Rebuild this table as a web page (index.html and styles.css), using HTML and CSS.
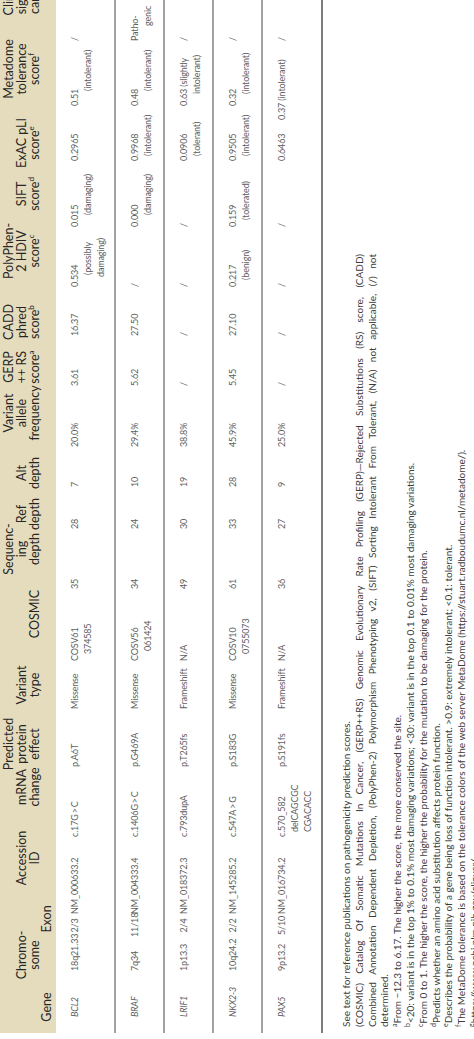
FILE: index.html
```html
<!DOCTYPE html>
<html lang="en">
<head>
<meta charset="utf-8">
<title>Variant table</title>
<link rel="stylesheet" href="styles.css">
</head>
<body>
<div class="page">
  <div class="sheet">
    <div class="table">
      <div class="head">
        <div class="h low"><span>Gene</span></div>
        <div class="h"><span>Chromo-</span><span>some</span></div>
        <div class="h low"><span>Exon</span></div>
        <div class="h"><span>Accession</span><span>ID</span></div>
        <div class="h"><span>mRNA</span><span>change</span></div>
        <div class="h"><span>Predicted</span><span>protein</span><span>effect</span></div>
        <div class="h"><span>Variant</span><span>type</span></div>
        <div class="h"><span>COSMIC</span></div>
        <div class="h"><span>Sequenc-</span><span>ing</span><span>depth</span></div>
        <div class="h"><span>Ref</span><span>depth</span></div>
        <div class="h"><span>Alt</span><span>depth</span></div>
        <div class="h"><span>Variant</span><span>allele</span><span>frequency</span></div>
        <div class="h"><span>GERP</span><span>++ RS</span><span>score<sup>a</sup></span></div>
        <div class="h"><span>CADD</span><span>phred</span><span>score<sup>b</sup></span></div>
        <div class="h"><span>PolyPhen-</span><span>2 HDIV</span><span>score<sup>c</sup></span></div>
        <div class="h"><span>SIFT</span><span>score<sup>d</sup></span></div>
        <div class="h"><span>ExAC pLI</span><span>score<sup>e</sup></span></div>
        <div class="h"><span>Metadome</span><span>tolerance</span><span>score<sup>f</sup></span></div>
        <div class="h"><span>ClinVar</span><span>signifi-</span><span>cance<sup>g</sup></span></div>
      </div>

      <div class="row">
        <div class="c g"><span>BCL2</span></div>
        <div class="c"><span>18q21.33</span></div>
        <div class="c ctr"><span>2/3</span></div>
        <div class="c"><span>NM_000633.2</span></div>
        <div class="c"><span>c.17G&#8201;&gt;&#8201;C</span></div>
        <div class="c"><span>p.A6T</span></div>
        <div class="c"><span>Missense</span></div>
        <div class="c"><span>COSV61</span><span class="i7">374585</span></div>
        <div class="c"><span>35</span></div>
        <div class="c"><span>28</span></div>
        <div class="c"><span>7</span></div>
        <div class="c"><span>20.0%</span></div>
        <div class="c"><span>3.61</span></div>
        <div class="c"><span>16.37</span></div>
        <div class="c"><span>0.534</span><span class="i12">(possibly</span><span class="i10">damaging)</span></div>
        <div class="c"><span>0.015</span><span class="i12">(damaging)</span></div>
        <div class="c"><span>0.2965</span></div>
        <div class="c"><span>0.51</span><span class="i15">(intolerant)</span></div>
        <div class="c"><span>/</span></div>
      </div>

      <div class="row">
        <div class="c g"><span>BRAF</span></div>
        <div class="c"><span>7q34</span></div>
        <div class="c ctr"><span>11/18</span></div>
        <div class="c"><span>NM_004333.4</span></div>
        <div class="c"><span>c.1406G&#8201;&gt;&#8201;C</span></div>
        <div class="c"><span>p.G469A</span></div>
        <div class="c"><span>Missense</span></div>
        <div class="c"><span>COSV56</span><span class="i10">061424</span></div>
        <div class="c"><span>34</span></div>
        <div class="c"><span>24</span></div>
        <div class="c"><span>10</span></div>
        <div class="c"><span>29.4%</span></div>
        <div class="c"><span>5.62</span></div>
        <div class="c"><span>27.50</span></div>
        <div class="c"><span>/</span></div>
        <div class="c"><span>0.000</span><span class="i12">(damaging)</span></div>
        <div class="c"><span>0.9968</span><span class="i5">(intolerant)</span></div>
        <div class="c"><span>0.48</span><span class="i15">(intolerant)</span></div>
        <div class="c"><span>Patho-</span><span class="i15">genic</span></div>
      </div>

      <div class="row">
        <div class="c g"><span>LRIF1</span></div>
        <div class="c"><span>1p13.3</span></div>
        <div class="c ctr"><span>2/4</span></div>
        <div class="c"><span>NM_018372.3</span></div>
        <div class="c"><span>c.793dupA</span></div>
        <div class="c"><span>p.T265fs</span></div>
        <div class="c"><span>Frameshift</span></div>
        <div class="c"><span>N/A</span></div>
        <div class="c"><span>49</span></div>
        <div class="c"><span>30</span></div>
        <div class="c"><span>19</span></div>
        <div class="c"><span>38.8%</span></div>
        <div class="c"><span>/</span></div>
        <div class="c"><span>/</span></div>
        <div class="c"><span>/</span></div>
        <div class="c"><span>/</span></div>
        <div class="c"><span>0.0906</span><span class="i5">(tolerant)</span></div>
        <div class="c"><span>0.63 (slightly</span><span class="i12">intolerant)</span></div>
        <div class="c"><span>/</span></div>
      </div>

      <div class="row">
        <div class="c g"><span>NKX2-3</span></div>
        <div class="c"><span>10q24.2</span></div>
        <div class="c ctr"><span>2/2</span></div>
        <div class="c"><span>NM_145285.2</span></div>
        <div class="c"><span>c.547A&#8201;&gt;&#8201;G</span></div>
        <div class="c"><span>p.S183G</span></div>
        <div class="c"><span>Missense</span></div>
        <div class="c"><span>COSV10</span><span class="i7">0755073</span></div>
        <div class="c"><span>61</span></div>
        <div class="c"><span>33</span></div>
        <div class="c"><span>28</span></div>
        <div class="c"><span>45.9%</span></div>
        <div class="c"><span>5.45</span></div>
        <div class="c"><span>27.10</span></div>
        <div class="c"><span>0.217</span><span class="i7">(benign)</span></div>
        <div class="c"><span>0.159</span><span class="i7">(tolerated)</span></div>
        <div class="c"><span>0.9505</span><span class="i5">(intolerant)</span></div>
        <div class="c"><span>0.32</span><span class="i12">(intolerant)</span></div>
        <div class="c"><span>/</span></div>
      </div>

      <div class="row last">
        <div class="c g"><span>PAX5</span></div>
        <div class="c"><span>9p13.2</span></div>
        <div class="c ctr"><span>5/10</span></div>
        <div class="c"><span>NM_016734.2</span></div>
        <div class="c"><span>c.570_582</span><span class="i5">delCAGCGC</span><span class="i5">CGACACC</span></div>
        <div class="c"><span>p.S191fs</span></div>
        <div class="c"><span>Frameshift</span></div>
        <div class="c"><span>N/A</span></div>
        <div class="c"><span>36</span></div>
        <div class="c"><span>27</span></div>
        <div class="c"><span>9</span></div>
        <div class="c"><span>25.0%</span></div>
        <div class="c"><span>/</span></div>
        <div class="c"><span>/</span></div>
        <div class="c"><span>/</span></div>
        <div class="c"><span>/</span></div>
        <div class="c"><span>0.6463</span></div>
        <div class="c"><span class="out">0.37 (intolerant)</span></div>
        <div class="c"><span>/</span></div>
      </div>
    </div>

    <div class="notes">
      <p>See text for reference publications on pathogenicity prediction scores.</p>
      <p class="j">(COSMIC) Catalog Of Somatic Mutations In Cancer, (GERP++RS) Genomic Evolutionary Rate Profiling (GERP)—Rejected Substitutions (RS) score, (CADD)</p>
      <p class="j">Combined Annotation Dependent Depletion, (PolyPhen-2) Polymorphism Phenotyping v2, (SIFT) Sorting Intolerant From Tolerant, (N/A) not applicable, (/) not</p>
      <p>determined.</p>
      <p><sup>a</sup>From &minus;12.3 to 6.17. The higher the score, the more conserved the site.</p>
      <p><sup>b</sup>&lt;20: variant is in the top 1% to 0.1% most damaging variations; &lt;30: variant is in the top 0.1 to 0.01% most damaging variations.</p>
      <p><sup>c</sup>From 0 to 1. The higher the score, the higher the probability for the mutation to be damaging for the protein.</p>
      <p><sup>d</sup>Predicts whether an amino acid substitution affects protein function.</p>
      <p><sup>e</sup>Describes the probability of a gene being loss of function intolerant. &gt;0.9: extremely intolerant; &lt;0.1: tolerant.</p>
      <p><sup>f</sup>The MetaDome tolerance is based on the tolerance colors of the web server MetaDome (https://stuart.radboudumc.nl/metadome/).</p>
      <p><sup>g</sup>https://www.ncbi.nlm.nih.gov/clinvar/</p>
    </div>
  </div>
</div>
</body>
</html>
```

FILE: styles.css
```css
html, body {
  margin: 0;
  padding: 0;
  background: #ffffff;
}

body {
  font-family: Lato, "Open Sans", "DejaVu Sans", sans-serif;
}

.page {
  width: 474px;
  height: 1039px;
  overflow: hidden;
}

/* The table is typeset in landscape and turned a quarter turn */
.sheet {
  width: 1039px;
  height: 474px;
  transform-origin: 0 0;
  transform: translateY(1039px) rotate(-90deg);
}

.table {
  margin-top: -6px;
}

.head {
  display: grid;
  grid-template-columns: 52px 52px 20px 102px 40px 46px 72px 70px 60px 10px 72px 48px 44px 46px 96px 18px 84px 64px 82px;
  height: 56px;
  box-sizing: border-box;
  background: #e5dcbd;
  color: #262626;
  font-size: 12.5px;
  line-height: 13px;
}

.h {
  display: flex;
  flex-direction: column;
  align-items: center;
  justify-content: flex-end;
  padding-bottom: 15px;
  min-width: 0;
}

.h.low {
  padding-bottom: 3px;
}

.h span {
  display: block;
  white-space: nowrap;
}

.h sup {
  font-size: 8px;
  line-height: 0;
  vertical-align: 5px;
}

.row {
  display: grid;
  grid-template-columns: 46px 34px 23px 77px 70px 58px 48px 72px 60px 42px 40px 61px 50px 49px 60px 66px 55px 65px 68px;
  padding: 12px 0 7px 16px;
  min-height: 49px;
  box-sizing: border-box;
  border-bottom: 2px solid #a2a2a2;
  font-size: 9px;
  line-height: 13px;
  letter-spacing: -0.15px;
  color: #5e5e5e;
}

.row.last {
  border-bottom-color: #7c7c7c;
}

.c {
  min-width: 0;
}

.c span {
  display: block;
  white-space: nowrap;
}

.g {
  font-style: italic;
}

.ctr {
  text-align: center;
}

.i5 { padding-left: 5px; }
.i7 { padding-left: 7px; }
.i10 { padding-left: 10px; }
.i12 { padding-left: 12px; }
.i15 { padding-left: 15px; }

.c span.out {
  margin-left: -14px;
}

.notes {
  width: 773px;
  padding: 17px 0 0 6px;
  font-size: 10px;
  line-height: 12.8px;
  color: #3c3c3c;
}

.notes p {
  margin: 0;
  white-space: nowrap;
}

.notes p.j {
  white-space: normal;
  text-align: justify;
  text-align-last: justify;
}

.notes sup {
  font-size: 7px;
  line-height: 0;
  vertical-align: 4px;
}
```
